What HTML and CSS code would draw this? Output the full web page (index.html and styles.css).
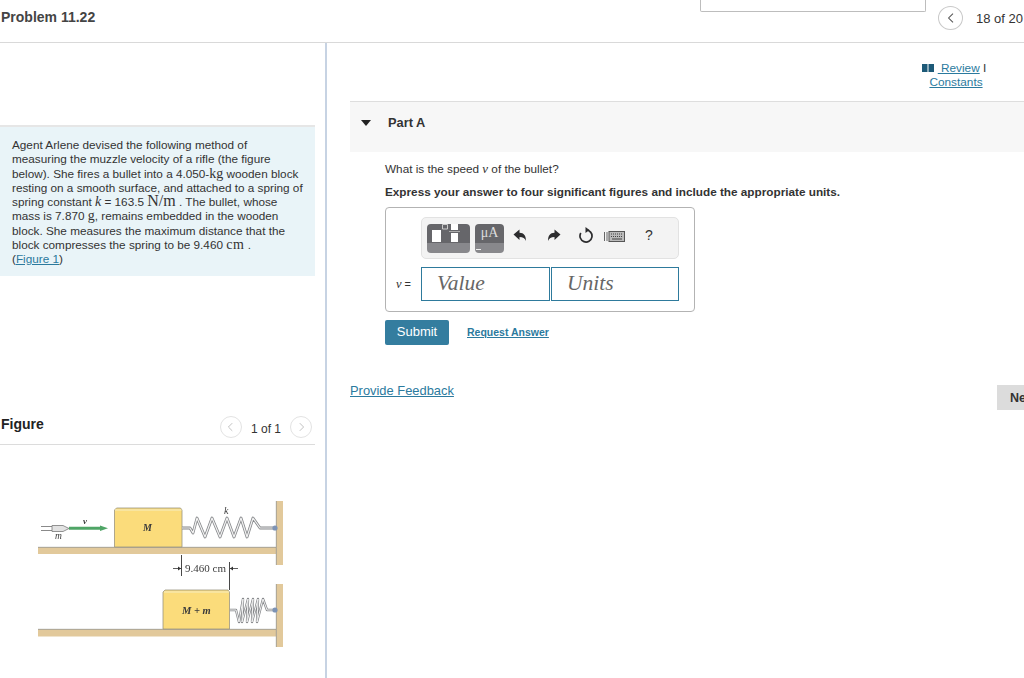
FILE: index.html
```html
<!DOCTYPE html>
<html lang="en">
<head>
<meta charset="utf-8">
<title>Problem 11.22</title>
<link rel="stylesheet" href="styles.css">
</head>
<body>
<header class="top">
  <h1 class="title">Problem 11.22</h1>
  <div class="search"></div>
  <div class="pager">
    <button class="circle large" aria-label="Previous"><svg viewBox="0 0 10 14" width="8" height="12"><path d="M7.500 1.500 2 7l5.500 5.500" fill="none" stroke="#555" stroke-width="1.300"/></svg></button>
    <span class="count">18 of 20</span>
  </div>
</header>
<main class="columns">
  <section class="left">
    <div class="intro">
      <p>Agent Arlene devised the following method of measuring the muzzle velocity of a rifle (the figure below). She fires a bullet into a 4.050-<span class="m">kg</span> wooden block resting on a smooth surface, and attached to a spring of spring constant <i class="m">k</i> = 163.5 <span class="m big">N/m</span> . The bullet, whose mass is 7.870 <span class="m">g</span>, remains embedded in the wooden block. She measures the maximum distance that the block compresses the spring to be 9.460 <span class="m sp">cm</span> .<br>(<a href="#">Figure 1</a>)</p>
    </div>
    <div class="figure-head">
      <h2>Figure</h2>
      <div class="fig-pager">
        <button class="circle" aria-label="Previous"><svg viewBox="0 0 10 14" width="7" height="10"><path d="M7.500 1.500 2 7l5.500 5.500" fill="none" stroke="#bbb" stroke-width="1.300"/></svg></button>
        <span class="of">1 of 1</span>
        <button class="circle" aria-label="Next"><svg viewBox="0 0 10 14" width="7" height="10"><path d="M2.500 1.500 8 7l-5.500 5.500" fill="none" stroke="#bbb" stroke-width="1.300"/></svg></button>
      </div>
    </div>
    <svg class="diagram" viewBox="0 480 320 198" width="320" height="198">
      <g fill="#e2c99b">
        <rect x="38" y="547" width="238" height="7"/>
        <rect x="38" y="629" width="238" height="7.500"/>
        <rect x="276" y="501" width="7" height="64"/>
        <rect x="276" y="584" width="7" height="63"/>
      </g>
      <path d="M38 547.300h238M38 629.300h238M276.300 501v64M276.300 584v63" stroke="#8d8f92" stroke-width=".7" fill="none"/>
      <path d="M114.500 547v-37l2-2h64l1.500 2v37z" fill="#fbdc7b" stroke="#9a9580" stroke-width=".8"/>
      <path d="M115 510h66.500" stroke="#f6edc4" stroke-width="1"/>
      <path d="M163 629v-37l2-2h63l1.500 2v37z" fill="#fbdc7b" stroke="#9a9580" stroke-width=".8"/>
      <path d="M164 592h65" stroke="#f6edc4" stroke-width="1"/>
      <path d="M182 528h8l3 5 4-15 8 19 7-19 8 19 7-19 7 19 7-19 6 19 6-19 7 10h13" fill="none" stroke="#85878a" stroke-width="2.800" stroke-linejoin="round"/>
      <path d="M182 528h8l3 5 4-15 8 19 7-19 8 19 7-19 7 19 7-19 6 19 6-19 7 10h13" fill="none" stroke="#f2f2f2" stroke-width="1.200" stroke-linejoin="round"/>
      <path d="M230 610h6l3 12 4-23-1 23 6-23-1 23 6-23-1 23 6-23-1 23 6-23 4 11h8" fill="none" stroke="#85878a" stroke-width="2.400" stroke-linejoin="round"/>
      <path d="M230 610h6l3 12 4-23-1 23 6-23-1 23 6-23-1 23 6-23-1 23 6-23 4 11h8" fill="none" stroke="#f2f2f2" stroke-width="1" stroke-linejoin="round"/>
      <circle cx="275" cy="528" r="2.600" fill="#7d93b5"/>
      <circle cx="275" cy="610" r="2.600" fill="#7d93b5"/>
      <path d="M41 526.500h11M41 530.500h11" stroke="#8a8a8a" stroke-width="1.200"/>
      <path d="M52 525.500h11l6 3-6 3H52z" fill="#e2e2e2" stroke="#7a7a7a" stroke-width=".8"/>
      <path d="M69 528.200h33" stroke="#4fa566" stroke-width="3"/>
      <path d="M100 525.500l8 2.700-8 2.700z" fill="#4fa566"/>
      <path d="M181.500 555v21M229.500 562v28" stroke="#333" stroke-width=".9"/>
      <path d="M173 568.500h8M238 568.500h-8" stroke="#333" stroke-width=".8"/>
      <path d="M181 568.500l-3-2v4zM230 568.500l3-2v4z" fill="#333"/>
      <g class="dlabel">
        <text x="83" y="524" font-weight="700" font-size="9">v</text>
        <text x="55" y="539" font-size="9.500">m</text>
        <text x="143" y="531" font-weight="700" font-size="10">M</text>
        <text x="224" y="514" font-size="10">k</text>
        <text x="182" y="614" font-weight="700" font-size="10.500">M + m</text>
      </g>
      <text class="dlabel up" x="185" y="571.500" font-size="11">9.460 cm</text>
    </svg>
  </section>
  <section class="right">
    <div class="review">
      <svg viewBox="0 0 12 8" width="12" height="8"><path d="M0 0h5.500v8H0zM6.500 0H12v8H6.500z" fill="#1d5a78"/></svg>
      <a href="#">&nbsp;Review</a> I&nbsp;<br><a href="#">Constants</a>
    </div>
    <div class="part-head">
      <span class="tri"></span><strong>Part A</strong>
    </div>
    <div class="part-body">
      <p class="q">What is the speed <i class="m small">v</i> of the bullet?</p>
      <p class="ins">Express your answer to four significant figures and include the appropriate units.</p>
      <div class="answer">
        <div class="toolbar">
          <div class="tpl one">
            <svg viewBox="0 0 43 29" width="43" height="29"><path d="M5 6h9v12H5zM24 0h7v6h-7zM24 9h7v9h-7z" fill="#fff"/><path d="M15.500.500h5v4.500h-5z" fill="none" stroke="#ccc"/><path d="M22 7.500h11" stroke="#aaa"/></svg>
          </div>
          <div class="tpl two">μA</div>
          <svg class="ico" viewBox="0 0 14 14" width="14" height="14"><path d="M.5 5.500 6.500.5v3.200c4.500 0 6.500 3 6.500 8.300-1-2.600-3-4-6.500-4v3z" fill="#2c2c2e"/></svg>
          <svg class="ico b" viewBox="0 0 14 14" width="14" height="14"><path d="M13.500 5.500 7.500.5v3.200C3 3.700 1 6.700 1 12c1-2.600 3-4 6.500-4v3z" fill="#2c2c2e"/></svg>
          <svg class="ico c" viewBox="0 0 16 16" width="16" height="16"><path d="M8 3a6 6 0 1 1-5.200 3" fill="none" stroke="#2c2c2e" stroke-width="1.700"/><path d="M7.500 0 11.500 3 7.500 6z" fill="#2c2c2e"/></svg>
          <svg class="ico d" viewBox="0 0 21 11" width="21" height="11"><rect x="5" y=".5" width="15.500" height="10" fill="#bbb" stroke="#555"/><path d="M7 3h12M7 5.500h12" stroke="#444" stroke-dasharray="1 1"/><path d="M8 8h10" stroke="#444"/><path d="M.5 1v9M3 1v9" stroke="#666"/></svg>
          <span class="help">?</span>
        </div>
        <div class="row">
          <span class="var"><i class="m">v</i> =</span>
          <div class="field">Value</div>
          <div class="field">Units</div>
        </div>
      </div>
      <div class="actions">
        <button class="submit">Submit</button>
        <a class="req" href="#">Request Answer</a>
      </div>
    </div>
    <div class="foot">
      <a href="#">Provide Feedback</a>
      <button class="next">Next</button>
    </div>
  </section>
</main>
</body>
</html>
```

FILE: styles.css
```css
* { box-sizing: border-box; }
html, body { margin: 0; height: 678px; overflow: hidden; background: #fff; }
body { font-family: "Liberation Sans", Arial, sans-serif; color: #333; font-size: 12px; }
a { color: #2b7a9e; text-decoration: underline; }
p, h1, h2 { margin: 0; }
button { font-family: inherit; padding: 0; }
.m { font-family: "Liberation Serif", "DejaVu Serif", serif; font-size: 14px; line-height: 0; }
.big { font-size: 16px; }
.sp { letter-spacing: .6px; }
.small { font-size: 13px; }

.top { height: 43px; border-bottom: 1px solid #d9d9d9; display: flex; align-items: flex-start; }
.title { font-size: 14px; font-weight: 700; color: #444; padding: 9px 0 0 1px; line-height: 17px; width: 700px; }
.search { width: 226px; height: 12px; border: 1px solid #bdbdbd; border-top: 0; border-radius: 0 0 2px 2px; }
.pager { display: flex; align-items: center; padding: 6px 0 0 12px; gap: 13px; white-space: nowrap; }
.count { font-size: 13px; color: #333; }
.circle { width: 22px; height: 22px; border-radius: 50%; border: 1px solid #e3e3e3; background: #fff; display: flex; align-items: center; justify-content: center; }
.circle.large { width: 25px; height: 24px; border-color: #c9c9c9; }

.columns { display: flex; height: 635px; }
.left { width: 327px; border-right: 2px solid #c7d3e3; padding-top: 83px; flex: none; }
.intro { width: 315px; height: 151px; margin-top: -1px; background: #e9f4f8; border-top: 2px solid #e6e6e6; padding: 11px 11px 0 12px; font-size: 11.750px; line-height: 14.250px; color: #333; }
.figure-head { width: 315px; height: 31px; margin-top: 138px; padding: 0 3px 0 1px; border-bottom: 1px solid #dcdcdc; display: flex; justify-content: space-between; align-items: center; }
.figure-head h2 { font-size: 14px; font-weight: 700; color: #222; margin-top: -10px; }
.fig-pager { display: flex; align-items: center; gap: 9px; font-size: 12px; color: #333; margin-top: -4px; }
.of { padding-top: 4px; }
.diagram { display: block; margin-top: 35px; filter: blur(.4px); }
.dlabel { font-family: "Liberation Serif", serif; font-style: italic; fill: #3b3b3b; }
.up { font-style: normal; }

.right { flex: 1; min-width: 0; padding-left: 23px; }
.review { width: 110px; margin-left: 551px; height: 58px; padding-top: 18px; text-align: center; line-height: 14px; font-size: 11.800px; }
.part-head { height: 51px; background: #f7f7f7; border-top: 1px solid #dedede; display: flex; align-items: center; padding: 0 0 10px 11px; font-size: 12.800px; color: #333; }
.tri { width: 0; height: 0; border-left: 5.500px solid transparent; border-right: 5.500px solid transparent; border-top: 6px solid #222; margin-right: 16px; margin-top: 2px; }
.part-head strong { margin-left: 1px; }
.part-body { padding-left: 35px; }
.q { margin-top: 9px; line-height: 15px; font-size: 11.750px; }
.ins { margin-top: 8px; line-height: 15px; font-weight: 700; font-size: 11.750px; }
.answer { margin-top: 8px; width: 310px; height: 105px; border: 1px solid #b3b3b3; border-radius: 4px; padding: 9px 15px 0 35px; }
.toolbar { width: 258px; height: 42px; background: #f3f3f3; border: 1px solid #e2e2e2; border-radius: 5px; display: flex; align-items: center; padding-left: 5px; }
.tpl { height: 29px; border-radius: 4px; background: linear-gradient(#66666a 0 19px, #88888c 19px); flex: none; }
.one { width: 43px; }
.one svg { display: block; }
.two { position: relative; width: 29px; margin-left: 5px; color: #ddd; font-family: "Liberation Serif", serif; font-size: 14px; text-align: center; line-height: 17px; }
.two::after { content: ""; position: absolute; left: 1px; bottom: 3px; width: 5px; height: 1px; background: #eee; }
.ico { flex: none; margin-left: 9px; margin-top: -4px; }
.ico.b { margin-left: 20px; }
.ico.c { margin-left: 17px; margin-top: -6px; }
.ico.d { margin-left: 10px; }
.help { margin-left: 20px; font-size: 14px; color: #333; margin-top: -6px; }
.row { display: flex; align-items: center; margin: 8px 0 0 -26px; }
.var { width: 26px; font-size: 11px; padding-left: 1px; }
.var .m { font-size: 12.500px; }
.field { width: 129px; height: 34px; border: 1px solid #2e7a9c; font-family: "Liberation Serif", serif; font-style: italic; font-size: 21.500px; color: #666; line-height: 30px; padding-left: 15px; }
.field + .field { width: 128px; margin-left: 1px; }
.actions { display: flex; align-items: center; margin-top: 8px; gap: 18px; }
.submit { width: 64px; height: 25px; background: #347d9f; border: 0; border-radius: 2px; color: #fff; font-size: 13px; padding-bottom: 2px; }
.req { font-weight: 700; font-size: 10.500px; margin-top: -2px; }
.foot { margin-top: 37px; display: flex; justify-content: space-between; align-items: flex-start; font-size: 12.900px; line-height: 18px; }
.next { width: 27px; height: 25px; margin-top: 3px; background: #dcdcdc; border: 0; font-size: 12.500px; font-weight: 700; color: #333; text-align: left; padding-left: 13px; white-space: nowrap; overflow: hidden; }
```
